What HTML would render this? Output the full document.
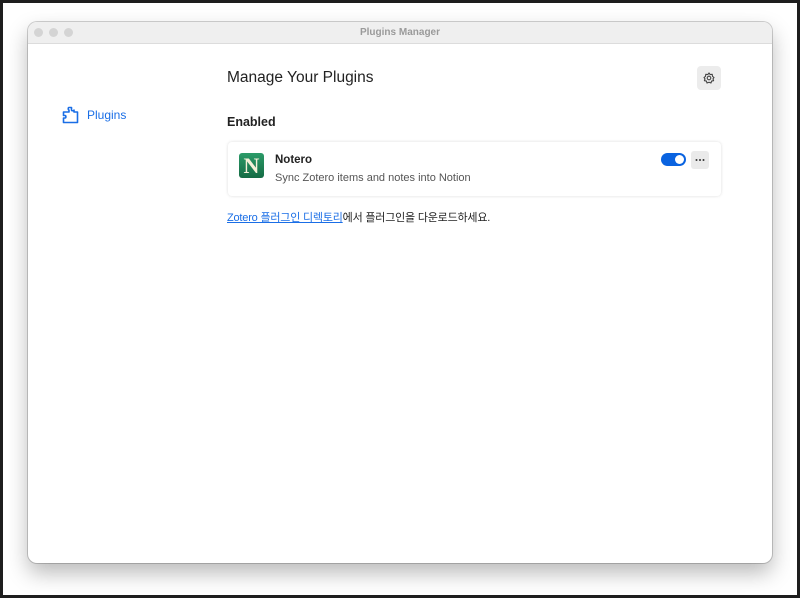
<!DOCTYPE html>
<html><head><meta charset="utf-8"><style>
html,body{margin:0;padding:0}
body{width:800px;height:598px;background:#fff;position:relative;overflow:hidden;font-family:"Liberation Sans","Noto Sans CJK KR",sans-serif;box-sizing:border-box;border:3px solid #1e1e1e}
.win{position:absolute;left:25px;top:19px;width:744px;height:541px;background:#fff;border-radius:9px;box-shadow:0 10px 22px rgba(0,0,0,.28),0 0 0 1px rgba(0,0,0,.18);overflow:hidden}
.tb{height:21px;background:#efefef;border-bottom:1px solid #dcdcdc;text-align:center;font-size:10px;color:#9a9a9a;line-height:21px;font-weight:bold;position:relative}
.dot{position:absolute;top:6px;width:9px;height:9px;border-radius:50%;background:#d4d4d4}
.t{position:absolute;white-space:nowrap}
</style></head><body>
<div class="win">
<div class="tb"><span class="dot" style="left:6px"></span><span class="dot" style="left:21px"></span><span class="dot" style="left:36px"></span>Plugins Manager</div>
<svg style="position:absolute;left:34px;top:84px" width="17" height="18" viewBox="0 0 17 18"><path d="M7 1.5h2.5v2.5c0 1 2.5 1 2.5 0V6h3.5v10.5H1.5V12h1.5c1.2 0 1.2-2.5 0-2.5H1.5V6h5.5V4c-1 0-1-2.5 0-2.5z" fill="none" stroke="#1a6ee6" stroke-width="1.6" stroke-linejoin="round"/></svg>
<div class="t" style="left:59px;top:86px;font-size:12px;color:#1a6ee6">Plugins</div>
<div class="t" style="left:199px;top:47px;font-size:15.5px;color:#222">Manage Your Plugins</div>
<div style="position:absolute;left:669px;top:44px;width:24px;height:24px;background:#ececec;border-radius:4px"><svg width="24" height="24" viewBox="0 0 24 24"><path d="M12 7l1.2 1.6 2-.3.3 2L17 11.5 16 12.8l.6 1.9-2 .4-.6 1.9-2-.8-2 .8-.6-1.9-2-.4.6-1.9L7 11.5l1.5-1.2.3-2 2 .3z" fill="none" stroke="#444" stroke-width="1.1" stroke-linejoin="round"/><circle cx="12" cy="12" r="1.8" fill="none" stroke="#444" stroke-width="1.1"/></svg></div>
<div class="t" style="left:199px;top:93px;font-size:12.5px;font-weight:bold;color:#222">Enabled</div>
<div style="position:absolute;left:200px;top:120px;width:493px;height:54px;border-radius:4px;box-shadow:0 0 3px rgba(0,0,0,.14)">
<div style="position:absolute;left:11px;top:11px;width:25px;height:25px;border-radius:3px;background:linear-gradient(#2b9b68,#156b45);color:#f4f0d8;font:bold 22px/25px 'Liberation Serif',serif;text-align:center">N</div>
<div class="t" style="left:47px;top:12px;font-size:11.5px;font-weight:bold;color:#222">Notero</div>
<div class="t" style="left:47px;top:30px;font-size:11px;color:#555">Sync Zotero items and notes into Notion</div>
<div style="position:absolute;left:433px;top:11px;width:25px;height:13px;border-radius:7px;background:#0a63e0"><div style="position:absolute;right:2px;top:2px;width:9px;height:9px;border-radius:50%;background:#fff"></div></div>
<div style="position:absolute;left:463px;top:9px;width:18px;height:18px;border-radius:3px;background:#eaeaea"><svg width="18" height="18"><circle cx="5.5" cy="9" r="1" fill="#333"/><circle cx="9" cy="9" r="1" fill="#333"/><circle cx="12.5" cy="9" r="1" fill="#333"/></svg></div>
</div>
<div class="t" style="left:199px;top:187px;font-size:11px;color:#222;letter-spacing:-0.2px"><span style="color:#1a6ee6;text-decoration:underline">Zotero 플러그인 디렉토리</span>에서 플러그인을 다운로드하세요.</div>
</div>
</body></html>
